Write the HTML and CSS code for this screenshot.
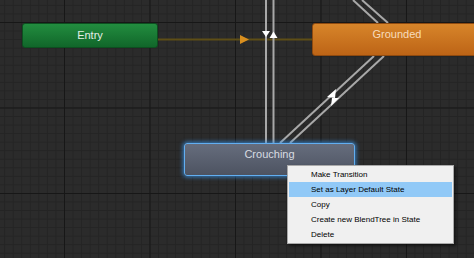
FILE: index.html
```html
<!DOCTYPE html>
<html lang="en">
<head>
  <meta charset="UTF-8" />
  <title>Animator</title>
  <link rel="stylesheet" href="styles.css">
</head>
<body>
  <div class="graph">
    <!-- transitions -->
    <svg class="wires" width="474" height="258" viewBox="0 0 474 258">
      <line x1="158" y1="39.5" x2="312" y2="39.5" stroke="#5e4e16" stroke-width="2" />
      <polygon points="240,35 249,39.5 240,44" fill="#d98f1f" />

      <line x1="266" y1="0" x2="266" y2="143" stroke="#a8a8a8" stroke-width="2" />
      <line x1="273.5" y1="0" x2="273.5" y2="143" stroke="#a8a8a8" stroke-width="2" />
      <polygon points="262,31 270,31 266,37" fill="#fff" />
      <polygon points="269.5,38 277.5,38 273.5,31.5" fill="#fff" />

      <line x1="374" y1="56" x2="280" y2="143" stroke="#a8a8a8" stroke-width="2" />
      <line x1="384" y1="56" x2="290" y2="143" stroke="#a8a8a8" stroke-width="2" />
      <polygon points="336,89 327,97 335,98" fill="#fff" />
      <polygon points="331,106 339,98 332,98" fill="#fff" />

      <line x1="353" y1="0" x2="378" y2="23" stroke="#a8a8a8" stroke-width="2" />
      <line x1="362" y1="0" x2="388" y2="23" stroke="#a8a8a8" stroke-width="2" />
    </svg>

    <div class="state entry">Entry</div>
    <div class="state grounded">Grounded</div>
    <div class="state crouching">Crouching</div>

    <!-- right click menu -->
    <ul class="menu">
      <li>Make Transition</li>
      <li class="active">Set as Layer Default State</li>
      <li>Copy</li>
      <li>Create new BlendTree in State</li>
      <li>Delete</li>
    </ul>
  </div>
</body>
</html>
```

FILE: styles.css
```css
body {
  margin: 0;
  background: #2a2a2a;
  font-family: 'Liberation Sans', Arial, sans-serif;
}

.graph {
  position: relative;
  width: 474px;
  height: 258px;
  overflow: hidden;
  background-color: #2b2b2b;
  background-image:
    linear-gradient(to right, #171717 1px, transparent 1px),
    linear-gradient(to bottom, #171717 1px, transparent 1px),
    linear-gradient(to right, #242424 1px, transparent 1px),
    linear-gradient(to bottom, #242424 1px, transparent 1px);
  background-size: 85.5px 85.5px, 85.5px 85.5px, 8.55px 8.55px, 8.55px 8.55px;
  background-position: 64px 22px;
}

.wires {
  position: absolute;
  left: 0;
  top: 0;
}

.state {
  position: absolute;
  display: flex;
  align-items: flex-start;
  justify-content: center;
  box-sizing: border-box;
  border-radius: 3px;
  padding-top: 4px;
  font-size: 11px;
  line-height: 13px;
}

.entry {
  left: 22px;
  top: 23px;
  width: 136px;
  height: 25px;
  align-items: center;
  padding-top: 0;
  background: linear-gradient(#228d3f, #11662a);
  border: 1px solid #0d4f20;
  color: #e4efe6;
}

.grounded {
  left: 312px;
  top: 23px;
  width: 170px;
  height: 33px;
  background: linear-gradient(#d7852a, #bd6416);
  border: 1px solid #8e4a10;
  color: #f8dcbc;
}

.crouching {
  left: 184px;
  top: 143px;
  width: 171px;
  height: 33px;
  background: linear-gradient(#666d7d, #4d5361);
  border: 1px solid #62aef0;
  box-shadow: 0 0 4px 1px rgba(60, 150, 235, 0.8);
  color: #d8dce2;
}

.menu {
  position: absolute;
  left: 287px;
  top: 165px;
  width: 167px;
  box-sizing: border-box;
  margin: 0;
  padding: 1px;
  list-style: none;
  background: #f0f0f0;
  border: 1px solid #a9a9a9;
  box-shadow: 2px 2px 3px rgba(0, 0, 0, 0.5);
}

.menu li {
  height: 15px;
  line-height: 15px;
  padding-left: 22px;
  font-size: 8px;
  color: #000;
  white-space: nowrap;
}

.menu li.active {
  background: #91c9f7;
}
```
